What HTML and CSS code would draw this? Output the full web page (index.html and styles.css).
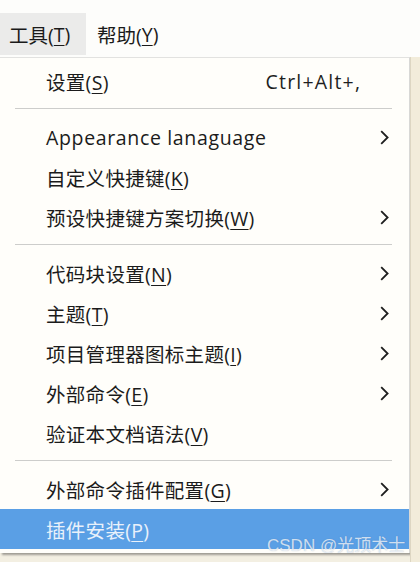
FILE: index.html
```html
<!DOCTYPE html>
<html lang="zh-CN">
<head>
<meta charset="utf-8">
<link rel="stylesheet" href="styles.css">
</head>
<body>
<div class="page">
  <div class="menubar">
    <div class="top-item active">工具(<u>T</u>)</div>
    <div class="top-item">帮助(<u>Y</u>)</div>
  </div>
  <div class="stage">
    <div class="menu">
      <div class="row"><span class="label">设置(<u>S</u>)</span><span class="key">Ctrl+Alt+,</span><span class="arrow"></span></div>
      <div class="sep"></div>
      <div class="row"><span class="label latin">Appearance lanaguage</span><span class="key"></span><span class="arrow"><svg width="9" height="15" viewBox="0 0 9 15"><path d="M1.2 1.2 L7.6 7.5 L1.2 13.8" fill="none" stroke="#1e1e1e" stroke-width="1.8"/></svg></span></div>
      <div class="row"><span class="label">自定义快捷键(<u>K</u>)</span><span class="key"></span><span class="arrow"></span></div>
      <div class="row"><span class="label">预设快捷键方案切换(<u>W</u>)</span><span class="key"></span><span class="arrow"><svg width="9" height="15" viewBox="0 0 9 15"><path d="M1.2 1.2 L7.6 7.5 L1.2 13.8" fill="none" stroke="#1e1e1e" stroke-width="1.8"/></svg></span></div>
      <div class="sep"></div>
      <div class="row"><span class="label">代码块设置(<u>N</u>)</span><span class="key"></span><span class="arrow"><svg width="9" height="15" viewBox="0 0 9 15"><path d="M1.2 1.2 L7.6 7.5 L1.2 13.8" fill="none" stroke="#1e1e1e" stroke-width="1.8"/></svg></span></div>
      <div class="row"><span class="label">主题(<u>T</u>)</span><span class="key"></span><span class="arrow"><svg width="9" height="15" viewBox="0 0 9 15"><path d="M1.2 1.2 L7.6 7.5 L1.2 13.8" fill="none" stroke="#1e1e1e" stroke-width="1.8"/></svg></span></div>
      <div class="row"><span class="label">项目管理器图标主题(<u>I</u>)</span><span class="key"></span><span class="arrow"><svg width="9" height="15" viewBox="0 0 9 15"><path d="M1.2 1.2 L7.6 7.5 L1.2 13.8" fill="none" stroke="#1e1e1e" stroke-width="1.8"/></svg></span></div>
      <div class="row"><span class="label">外部命令(<u>E</u>)</span><span class="key"></span><span class="arrow"><svg width="9" height="15" viewBox="0 0 9 15"><path d="M1.2 1.2 L7.6 7.5 L1.2 13.8" fill="none" stroke="#1e1e1e" stroke-width="1.8"/></svg></span></div>
      <div class="row"><span class="label">验证本文档语法(<u>V</u>)</span><span class="key"></span><span class="arrow"></span></div>
      <div class="sep"></div>
      <div class="row"><span class="label">外部命令插件配置(<u>G</u>)</span><span class="key"></span><span class="arrow"><svg width="9" height="15" viewBox="0 0 9 15"><path d="M1.2 1.2 L7.6 7.5 L1.2 13.8" fill="none" stroke="#1e1e1e" stroke-width="1.8"/></svg></span></div>
      <div class="row hl"><span class="label">插件安装(<u>P</u>)</span><span class="key"></span><span class="arrow"></span></div>
    </div>
    <div class="side"></div>
  </div>
  <div class="watermark">CSDN @光顶术士</div>
</div>
</body>
</html>
```

FILE: styles.css
```css
* { box-sizing: border-box; }
html, body { margin: 0; padding: 0; }
body {
  width: 420px;
  height: 562px;
  overflow: hidden;
  background: #f3efe2;
  font-family: "Open Sans", "Noto Sans CJK SC", sans-serif;
  color: #1b1b1b;
}
.page {
  position: relative;
  width: 420px;
  height: 562px;
  display: flex;
  flex-direction: column;
}
u { text-decoration-thickness: 1px; text-underline-offset: 3px; }
.menubar {
  height: 57px;
  background: #fdfdfb;
  display: flex;
  align-items: flex-end;
  padding-bottom: 2px;
}
.top-item {
  height: 42px;
  display: flex;
  align-items: center;
  padding: 0 8px 0 9px;
  font-size: 19.5px;
  font-family: "Open Sans", "Noto Sans CJK SC", sans-serif;
  color: #1a1a1a;
}
.top-item.active { background: #ebebea; width: 86px; }
.top-item + .top-item { padding-left: 11px; }
.stage {
  display: flex;
  flex: 1;
}
.menu {
  width: 410px;
  background: #fffefa;
  border-top: 1px solid #e2e2e0;
  border-right: 1px solid #d8d8d6;
  box-shadow: 2px 2px 2px rgba(0,0,0,0.35);
  padding-top: 3px;
  padding-bottom: 4px;
  align-self: flex-start;
}
.row {
  height: 40px;
  display: grid;
  grid-template-columns: 1fr auto 9px;
  column-gap: 20px;
  align-items: center;
  padding: 0 20px 0 46px;
  font-size: 19.5px;
  letter-spacing: 0.3px;
  font-family: "Open Sans", "Noto Sans CJK SC", sans-serif;
}
.row .label { white-space: nowrap; }
.row .label.latin { letter-spacing: 0.65px; }
.row .key {
  font-family: "Open Sans", sans-serif;
  font-size: 19.5px;
  letter-spacing: 1.2px;
  margin-right: -1.2px;
  color: #1e1e1e;
}
.row .arrow { display: flex; align-items: center; height: 15px; }
.row.hl {
  background: #5a9fe5;
  color: #e9f1fb;
}
.sep {
  height: 1px;
  background: #cdcdcb;
  margin: 7px 17px 8px 15px;
}
.side {
  flex: 1;
  background: #f2ecda;
  border-left: 1px solid #ddd6c2;
}
.watermark {
  position: absolute;
  left: 267px;
  top: 531px;
  font-family: "Liberation Sans", "Noto Sans CJK SC", sans-serif;
  font-size: 17px;
  color: rgba(255,255,255,0.72);
  text-shadow: 0 0 1px rgba(80,120,170,0.5);
}
```
